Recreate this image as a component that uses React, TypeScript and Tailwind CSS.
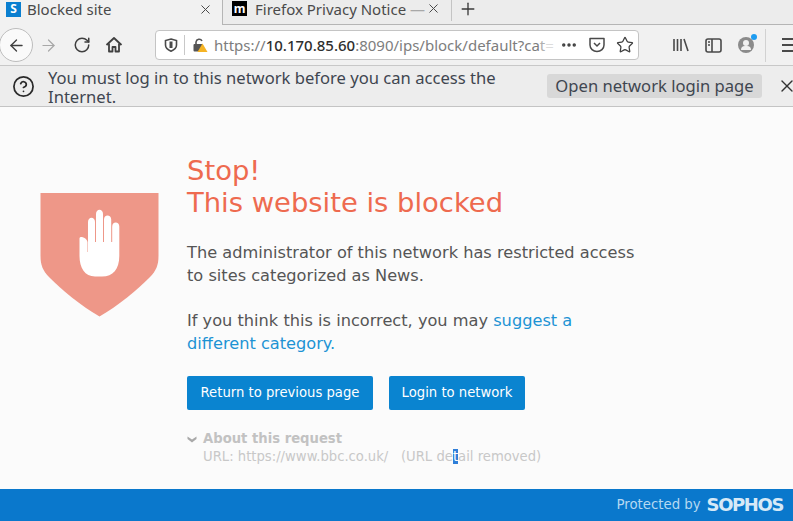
import { ArrowLeft, ArrowRight, RotateCw, X, Plus, Ellipsis, Star, CircleHelp } from 'lucide-react'

const ui = { fontFamily: '"Noto Sans", sans-serif' }

function Shield() {
    return (
        <svg width="120" height="126" viewBox="0 0 120 126" className="block">
            <path d="M0.5 1H118.5V64C118.5 73 116 79 110 85C97 98 78 114 59.5 124.5C41 114 22 98 9 85C3 79 0.5 73 0.5 64Z" fill="#ee9788" />
            <path
                d="M39.5 64V46.5C39.5 45.3 40.5 44.8 42 45C45 45.5 47 47.5 47.5 50V60H48V30C48 27.5 49.5 25.8 51.5 25.8C53.5 25.8 55 27.5 55 30V50H56V22C56 19.5 57.5 17.8 59.5 17.8C61.5 17.8 63 19.5 63 22V50H64V27.5C64 25 65.5 23.5 67.5 23.5C69.5 23.5 71.2 25 71.2 27.5V50H72.2V34.5C72.2 32 73.7 30.5 75.7 30.5C77.7 30.5 79.3 32 79.3 34.5V64C79.3 77 73 84.5 62 84.5H55C45 84.5 39.5 76 39.5 64Z"
                fill="#ffffff"
            />
        </svg>
    )
}

export default function App() {
    return (
        <div className="flex h-[521px] w-[793px] flex-col overflow-hidden bg-[#fbfbfb]">
            {/* Tab strip */}
            <div style={ui} className="flex h-[25px] shrink-0 border-b border-[#b5b5b5] bg-[#ececec] text-[#4a4a4a]">
                <div className="-mb-px flex w-[223px] items-center border-r border-[#b5b5b5] bg-[#f1f1f1] pb-[7px] pl-[6px] pr-[9px]">
                    <span className="flex h-[15px] w-[15px] items-center justify-center bg-[#0a7fd0] text-[12px] font-bold leading-none text-white">S</span>
                    <span className="ml-[6px] flex-1 text-[15px] leading-[18px]">Blocked site</span>
                    <X size={15} strokeWidth={1.6} />
                </div>
                <div className="flex w-[228px] items-center pb-[7px] pl-[9px] pr-[10px]">
                    <span className="flex h-[15px] w-[15px] items-center justify-center bg-black text-[12px] font-bold leading-none text-white">m</span>
                    <span className="ml-[8px] w-[168px] whitespace-nowrap text-[15px] leading-[18px]">
                        Firefox Privacy Notice <span className="text-[#a8a8a8]">—</span>
                    </span>
                    <X size={15} strokeWidth={1.6} className="ml-auto" />
                </div>
                <div className="mb-[3px] w-px bg-[#c4c4c4]" />
                <div className="flex w-[32px] items-center justify-center pb-[7px] text-[#3a3a3a]">
                    <Plus size={20} strokeWidth={1.6} />
                </div>
            </div>

            {/* Nav bar */}
            <div style={ui} className="flex h-[41px] shrink-0 items-center border-b border-[#c8c8c8] bg-[#f1f1f1] text-[#3f3f3f]">
                <div className="-ml-[1px] flex h-[34px] w-[34px] shrink-0 items-center justify-center rounded-full border border-[#bdbdbd] bg-[#fafafa]">
                    <ArrowLeft size={19} strokeWidth={1.7} />
                </div>
                <ArrowRight size={19} strokeWidth={1.5} className="ml-[6px] shrink-0 text-[#a8a8a8]" />
                <RotateCw size={18} strokeWidth={2} className="ml-[15px] shrink-0" />
                <svg width="18" height="18" viewBox="0 0 18 18" fill="none" stroke="#3f3f3f" strokeWidth="1.8" strokeLinejoin="round" className="ml-[14px] shrink-0">
                    <path d="M1.5 9L9 2L16.5 9" />
                    <path d="M4 7.5V15.5H7.5V11H10.5V15.5H14V7.5" />
                </svg>
                <div className="ml-[32px] flex h-[30px] w-[484px] shrink-0 items-center rounded-[4px] border border-[#c4c4c4] bg-white">
                    <svg width="16" height="16" viewBox="0 0 16 16" fill="none" className="ml-[7px] shrink-0" stroke="#4a4a4a" strokeWidth="1.6">
                        <path d="M8 2L13.5 3.5V8C13.5 11 11 13 8 14.2C5 13 2.5 11 2.5 8V3.5Z" />
                        <path d="M8 4.5V11" strokeWidth="3" />
                    </svg>
                    <span className="ml-[5px] h-[20px] w-px shrink-0 bg-[#c8c8c8]" />
                    <svg width="16" height="16" viewBox="0 0 16 16" className="ml-[7px] shrink-0">
                        <path d="M4 7V5A3.2 3.2 0 0 1 10 4" fill="none" stroke="#555" strokeWidth="1.6" />
                        <rect x="1.5" y="7" width="9" height="7.5" rx="1" fill="#555" />
                        <path d="M10.5 6.5L15.5 15H5.5Z" fill="#f5b324" />
                    </svg>
                    <span className="ml-[6px] w-[342px] shrink-0 whitespace-nowrap text-[15px] text-[#7d7d7d]">
                        https://<span className="font-medium text-[#2e2e2e]">10.170.85.60</span>:8090/ips/block/default?ca<span className="text-[#b0b0b0]">t</span>
                        <span className="text-[#dcdcdc]">=</span>
                    </span>
                    <Ellipsis size={18} strokeWidth={2.6} className="ml-[4px] shrink-0" />
                    <svg width="18" height="18" viewBox="0 0 18 18" fill="none" stroke="#4a4a4a" strokeWidth="1.5" className="ml-[10px] shrink-0">
                        <path d="M2 2.5H16V9A7 6.5 0 0 1 2 9Z" strokeLinejoin="round" />
                        <path d="M6 7L9 10L12 7" />
                    </svg>
                    <Star size={18} strokeWidth={1.7} className="ml-[10px] shrink-0" />
                </div>
                <svg width="18" height="16" viewBox="0 0 18 16" fill="none" stroke="#4a4a4a" strokeWidth="1.6" className="ml-[33px] shrink-0">
                    <path d="M2 2V14M5.5 2V14M9 2V14M12 2L16 14" />
                </svg>
                <svg width="17" height="15" viewBox="0 0 17 15" fill="none" stroke="#4a4a4a" strokeWidth="1.6" className="ml-[15px] shrink-0">
                    <rect x="1" y="1" width="15" height="13" rx="2" />
                    <path d="M7 1V14M3 4H5M3 7H5" />
                </svg>
                <div className="relative ml-[16px] h-[16px] w-[16px] shrink-0 rounded-full bg-[#8b8b8b]">
                    <span className="absolute left-[5px] top-[3px] h-[6px] w-[6px] rounded-full bg-[#f1f1f1]" />
                    <span className="absolute left-[3px] top-[9px] h-[4px] w-[10px] rounded-t-full bg-[#f1f1f1]" />
                    <span className="absolute -right-[3px] -top-[3px] h-[6px] w-[6px] rounded-full bg-[#1e9cf0]" />
                </div>
                <span className="ml-[11px] h-[33px] w-px shrink-0 bg-[#d2d2d2]" />
                <div className="ml-[16px] flex w-[14px] shrink-0 flex-col gap-[4px]">
                    <span className="h-[2px] bg-[#4a4a4a]" />
                    <span className="h-[2px] bg-[#4a4a4a]" />
                    <span className="h-[2px] bg-[#4a4a4a]" />
                </div>
            </div>

            {/* Notification bar */}
            <div style={ui} className="flex h-[41px] shrink-0 items-center border-b border-[#c4c4c4] bg-[#ededed] text-[#3f4650]">
                <CircleHelp size={23} strokeWidth={1.8} className="ml-[12px] shrink-0 text-[#2a2a2a]" />
                <p className="ml-[13px] w-[490px] shrink-0 pt-[2px] text-[16.6px] leading-[19px]">You must log in to this network before you can access the Internet.</p>
                <div className="ml-[9px] flex h-[24px] w-[215px] shrink-0 items-center justify-center rounded-[3px] bg-[#d8d8d8] pt-[1px] text-[16.6px]">Open network login page</div>
                <X size={20} strokeWidth={1.6} className="ml-[15px] shrink-0 text-[#333]" />
            </div>

            {/* Block page */}
            <div style={{ fontFamily: '"DejaVu Sans", sans-serif' }} className="flex min-h-0 flex-1">
                <div className="ml-[40px] mt-[85px]">
                    <Shield />
                </div>
                <div className="ml-[27px] flex w-[490px] flex-col pt-[48px]">
                    <h1 className="text-[27.4px] leading-[32px] text-[#ee6a4f]">
                        Stop!
                        <br />
                        This website is blocked
                    </h1>
                    <p className="mt-[22px] text-[16.2px] leading-[23px] text-[#555]">
                        The administrator of this network has restricted access
                        <br />
                        to sites categorized as News.
                    </p>
                    <p className="mt-[22px] text-[16.2px] leading-[23px] text-[#555]">
                        If you think this is incorrect, you may <span className="text-[#1d93d4]">suggest a</span>
                        <br />
                        <span className="text-[#1d93d4]">different category.</span>
                    </p>
                    <div className="mt-[21px] flex gap-[16px]">
                        <div className="flex h-[34px] w-[186px] items-center justify-center rounded-[2px] bg-[#0a84d0] text-[13.2px] text-white">Return to previous page</div>
                        <div className="flex h-[34px] w-[136px] items-center justify-center rounded-[2px] bg-[#0a84d0] text-[13.2px] text-white">Login to network</div>
                    </div>
                    <div className="mt-[20px] flex items-center text-[13.2px] font-bold leading-[18px] text-[#c2c2c2]">
                        <svg width="10" height="7" viewBox="0 0 10 7" className="mr-[6px]">
                            <path d="M0.5 0.5L5 3.5L9.5 0.5V3L5 6.5L0.5 3Z" fill="#a9a9a9" />
                        </svg>
                        About this request
                    </div>
                    <div className="ml-[16px] whitespace-pre text-[13.2px] leading-[18px] text-[#c8c8c8]">
                        URL: https://www.bbc.co.uk/   (URL de<span className="bg-[#2f7ed8] text-white">t</span>ail removed)
                    </div>
                </div>
            </div>

            {/* Footer */}
            <div className="flex h-[32px] shrink-0 items-center justify-end bg-[#0a78cc] pr-[10px]" style={{ fontFamily: '"DejaVu Sans", sans-serif' }}>
                <span className="text-[13.3px] text-[#b5d8f2]">Protected by</span>
                <span className="ml-[6px] text-[18px] font-bold leading-none tracking-[-1.4px] text-[#d6e9f7]">SOPHOS</span>
            </div>
        </div>
    )
}
